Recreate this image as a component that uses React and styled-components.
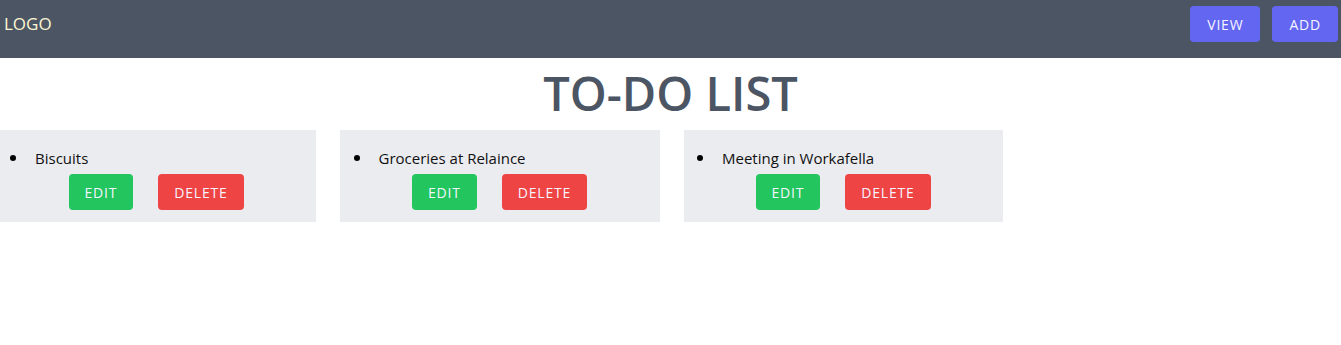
import React from "react";
import styled, { createGlobalStyle } from "styled-components";

const Global = createGlobalStyle`
  * { box-sizing: border-box; }
  body {
    margin: 0;
    font-family: "Open Sans", "Noto Sans", sans-serif;
    background: #ffffff;
    color: #111827;
  }
`;

const Nav = styled.nav`
  height: 58px;
  background: #4b5563;
  display: flex;
  align-items: flex-start;
  justify-content: space-between;
  padding: 6px 3px 0 4px;
`;

const Logo = styled.div`
  color: #fdf6d3;
  font-size: 17px;
  line-height: 36px;
`;

const NavActions = styled.div`
  display: flex;
  gap: 12px;
`;

const Button = styled.button`
  border: none;
  border-radius: 4px;
  height: 36px;
  padding: 0 ${(p) => p.$px || 16}px;
  font-family: inherit;
  font-size: 14px;
  letter-spacing: 0.8px;
  color: #f5f5ff;
  background: ${(p) => p.$bg};
  cursor: pointer;
`;

const Title = styled.h1`
  margin: 0;
  padding: 10px 0 12px;
  text-align: center;
  font-size: 47px;
  line-height: 50px;
  font-weight: 600;
  color: #4b5563;
`;

const Cards = styled.div`
  display: flex;
  gap: 24px;
  margin-left: -3.5px;
`;

const Card = styled.div`
  width: 319.5px;
  background: #ebecf0;
  padding: 16px 0 12px;
`;

const List = styled.ul`
  margin: 0;
  padding-left: 13.5px;
  list-style: none;
  font-size: 15px;
  line-height: 24px;
  color: #111;
`;

const Item = styled.li`
  display: flex;
  align-items: center;
  &::before {
    content: "";
    flex: none;
    width: 6px;
    height: 6px;
    border-radius: 50%;
    background: #000;
    margin-right: 19px;
  }
`;

const Actions = styled.div`
  display: flex;
  gap: 25px;
  padding-left: 72px;
  margin-top: 4px;
`;

const todos = ["Biscuits", "Groceries at Relaince", "Meeting in Workafella"];

export default function App() {
  return (
    <>
      <Global />
      <Nav>
        <Logo>LOGO</Logo>
        <NavActions>
          <Button $bg="#6366f1" $px={17}>VIEW</Button>
          <Button $bg="#6366f1" $px={17}>ADD</Button>
        </NavActions>
      </Nav>
      <Title>TO-DO LIST</Title>
      <Cards>
        {todos.map((t) => (
          <Card key={t}>
            <List>
              <Item>{t}</Item>
            </List>
            <Actions>
              <Button $bg="#22c55e">EDIT</Button>
              <Button $bg="#ef4444">DELETE</Button>
            </Actions>
          </Card>
        ))}
      </Cards>
    </>
  );
}
